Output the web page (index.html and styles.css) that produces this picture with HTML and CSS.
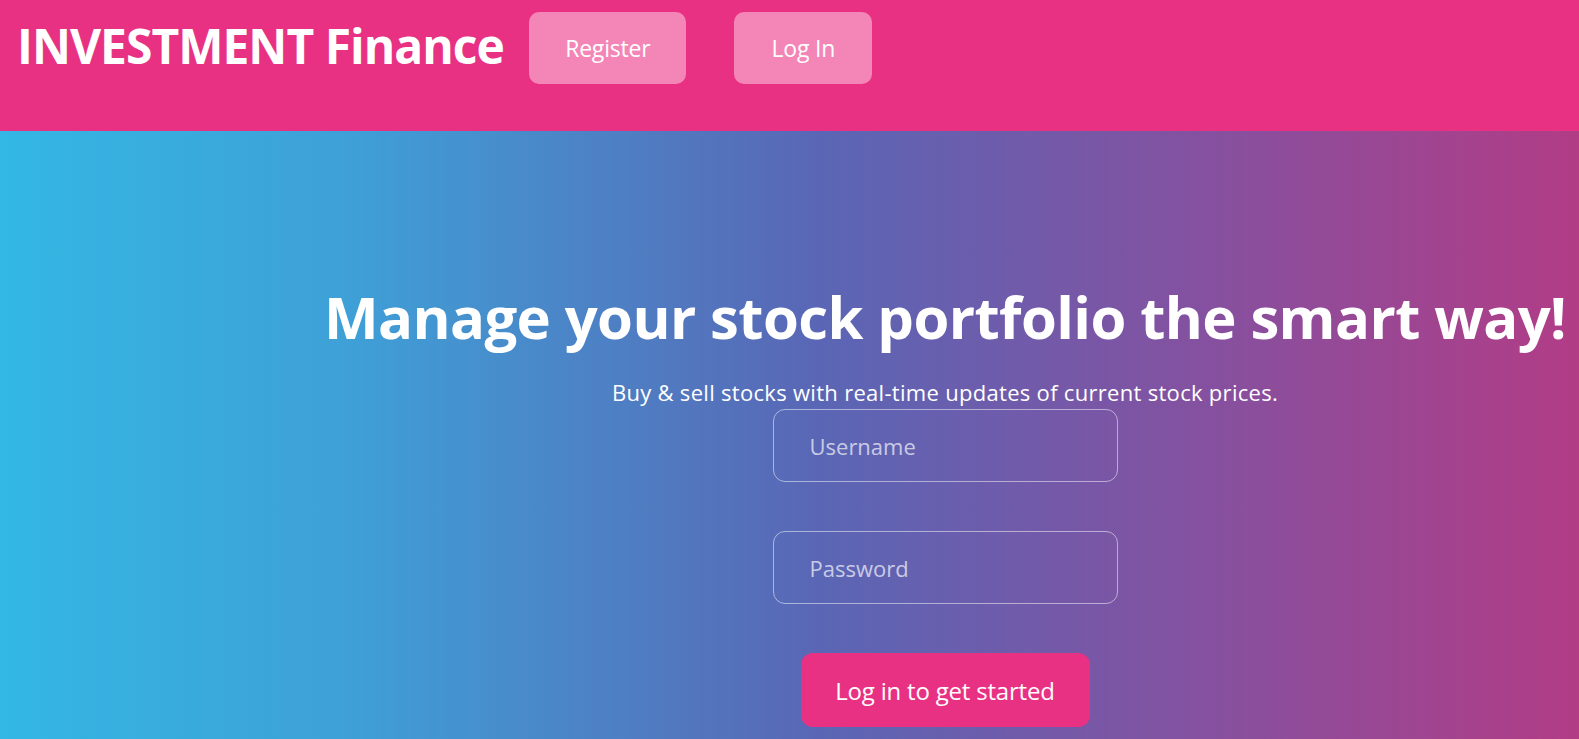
FILE: index.html
```html
<!DOCTYPE html>
<html lang="en">
<head>
<meta charset="utf-8">
<title>INVESTMENT Finance</title>
<link rel="stylesheet" href="styles.css">
</head>
<body>
<header class="topbar">
  <h1 class="brand">INVESTMENT Finance</h1>
  <nav class="nav">
    <button class="nav-btn nav-register">Register</button>
    <button class="nav-btn nav-login">Log In</button>
  </nav>
</header>
<main class="hero">
  <div class="hero-inner">
    <h2 class="hero-title">Manage your stock portfolio the smart way!</h2>
    <p class="hero-sub">Buy &amp; sell stocks with real-time updates of current stock prices.</p>
    <form class="login-form">
      <input class="field" type="text" placeholder="Username">
      <input class="field" type="password" placeholder="Password">
      <button class="submit" type="button">Log in to get started</button>
    </form>
  </div>
</main>
</body>
</html>
```
FILE: styles.css
```css
* { box-sizing: border-box; }
html, body { margin: 0; padding: 0; }
body {
  font-family: "Open Sans", "Noto Sans", sans-serif;
  color: #fff;
  width: 1579px;
  height: 739px;
  overflow: hidden;
}
.topbar {
  height: 131px;
  background: #e83183;
  display: flex;
  align-items: flex-start;
  padding: 12px 0 0 17px;
}
.brand {
  margin: 0;
  height: 72px;
  display: flex;
  align-items: center;
  font-size: 48px;
  font-weight: 700;
  letter-spacing: -1px;
  line-height: 1;
  padding-bottom: 4px;
}
.nav {
  display: flex;
  gap: 48px;
  margin-left: 25px;
}
.nav-btn {
  height: 72px;
  border: none;
  border-radius: 10px;
  background: #f386b6;
  color: #fff;
  font-family: inherit;
  font-size: 23px;
  letter-spacing: -0.2px;
  padding: 0 0 0 1px;
}
.nav-register { width: 157px; }
.nav-login { width: 138px; }
.hero {
  height: 608px;
  background: linear-gradient(90deg, #33b7e4 0%, #3ea0d7 22%, #5a66b5 52%, #8451a0 76%, #b23c86 100%);
  padding-left: 311px;
}
.hero-inner {
  display: flex;
  flex-direction: column;
  align-items: center;
  text-align: center;
  padding-top: 150px;
}
.hero-title {
  margin: 0;
  font-size: 58px;
  font-weight: 700;
  line-height: 72px;
  letter-spacing: -0.6px;
  white-space: nowrap;
}
.hero-sub {
  margin: 24px 0 0;
  font-size: 22px;
  line-height: 30px;
  letter-spacing: 0.3px;
}
.login-form {
  display: flex;
  flex-direction: column;
  align-items: center;
  gap: 49px;
  margin-top: 2px;
}
.field {
  width: 345px;
  height: 73px;
  border: 1px solid rgba(255, 255, 255, 0.5);
  border-radius: 12px;
  background: transparent;
  padding: 0 0 0 36px;
  font-family: inherit;
  font-size: 22px;
  color: #fff;
  outline: none;
}
.field::placeholder { color: rgba(255, 255, 255, 0.68); }
.submit {
  width: 289px;
  height: 74px;
  border: none;
  border-radius: 12px;
  background: #e83183;
  color: #fff;
  font-family: inherit;
  font-size: 24px;
  letter-spacing: -0.2px;
  padding: 0;
}
```
